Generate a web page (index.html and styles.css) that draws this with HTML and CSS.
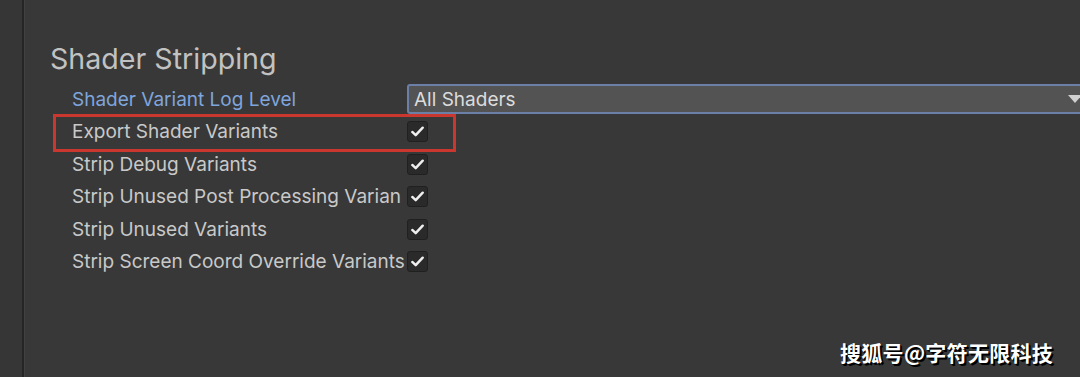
FILE: index.html
```html
<!DOCTYPE html>
<html>
<head>
<meta charset="utf-8">
<link rel="stylesheet" href="styles.css">
</head>
<body>
<div class="app">
  <div class="gutter"></div>
  <div class="divider"></div>
  <div class="panel">
    <h1 class="title">Shader Stripping</h1>
    <div class="rows">
      <div class="row">
        <div class="label blue">Shader Variant Log Level</div>
        <div class="dropdown"><span>All Shaders</span><span class="arrow"></span></div>
      </div>
      <div class="row highlighted">
        <div class="label">Export Shader Variants</div>
        <div class="check"><svg viewBox="0 0 20 20"><path d="M4.5 10.5l3.6 3.4L15.5 6"/></svg></div>
      </div>
      <div class="row">
        <div class="label">Strip Debug Variants</div>
        <div class="check"><svg viewBox="0 0 20 20"><path d="M4.5 10.5l3.6 3.4L15.5 6"/></svg></div>
      </div>
      <div class="row">
        <div class="label">Strip Unused Post Processing Varian</div>
        <div class="check"><svg viewBox="0 0 20 20"><path d="M4.5 10.5l3.6 3.4L15.5 6"/></svg></div>
      </div>
      <div class="row">
        <div class="label">Strip Unused Variants</div>
        <div class="check"><svg viewBox="0 0 20 20"><path d="M4.5 10.5l3.6 3.4L15.5 6"/></svg></div>
      </div>
      <div class="row">
        <div class="label">Strip Screen Coord Override Variants</div>
        <div class="check"><svg viewBox="0 0 20 20"><path d="M4.5 10.5l3.6 3.4L15.5 6"/></svg></div>
      </div>
    </div>
  </div>
  <div class="watermark">搜狐号@字符无限科技</div>
</div>
</body>
</html>
```
FILE: styles.css
```css
*, *::before, *::after { box-sizing: border-box; }
html, body { margin: 0; padding: 0; }
body {
  width: 1080px;
  height: 377px;
  overflow: hidden;
  background: #383838;
  font-family: Inter, "Noto Sans", sans-serif;
}
.app {
  position: relative;
  display: flex;
  width: 1080px;
  height: 377px;
}
.gutter {
  width: 22px;
  background: #363636;
}
.divider {
  width: 3px;
  background: linear-gradient(to right, #252525 0, #252525 2px, #414141 2px);
}
.panel {
  flex: 1;
  padding-top: 41px;
  padding-left: 25px;
}
.title {
  margin: 0;
  font-weight: 400;
  font-size: 28.6px;
  line-height: 36px;
  color: #c2c2c2;
}
.rows {
  margin-top: 6px;
  padding-left: 22px;
  display: flex;
  flex-direction: column;
}
.row {
  position: relative;
  display: flex;
  align-items: center;
  height: 32.5px;
}
.label {
  width: 335px;
  flex: none;
  white-space: nowrap;
  overflow: hidden;
  font-size: 19px;
  color: #c9c9c9;
}
.label.blue { color: #7fa5dc; }
.dropdown {
  flex: 1;
  margin-right: -6px;
  height: 30px;
  display: flex;
  align-items: center;
  justify-content: space-between;
  padding: 0 8px 0 5px;
  background: #535353;
  border: 2px solid #6c7fa6;
  border-radius: 3px;
  font-size: 19px;
  color: #dcdcdc;
}
.arrow {
  width: 0;
  height: 0;
  border-left: 7px solid transparent;
  border-right: 7px solid transparent;
  border-top: 8px solid #d0d0d0;
  margin-right: -6px;
}
.check {
  width: 21px;
  height: 21px;
  background: #2a2a2a;
  border: 1px solid #202020;
  border-radius: 3px;
  display: flex;
  align-items: center;
  justify-content: center;
}
.check svg {
  width: 19px;
  height: 19px;
  fill: none;
  stroke: #efefef;
  stroke-width: 2.6;
  stroke-linecap: round;
  stroke-linejoin: round;
}
.highlighted::after {
  content: "";
  position: absolute;
  left: -19px;
  top: -2px;
  width: 403px;
  height: 38px;
  border: 3px solid #c9372f;
  pointer-events: none;
}
.watermark {
  position: absolute;
  left: 840px;
  top: 339px;
  font-family: "Noto Sans CJK SC", sans-serif;
  font-weight: 700;
  font-size: 21px;
  line-height: 26px;
  color: #ffffff;
  text-shadow: 2px 2px 0 #000, 1px 1px 1px #000;
  letter-spacing: 0.3px;
}
```
